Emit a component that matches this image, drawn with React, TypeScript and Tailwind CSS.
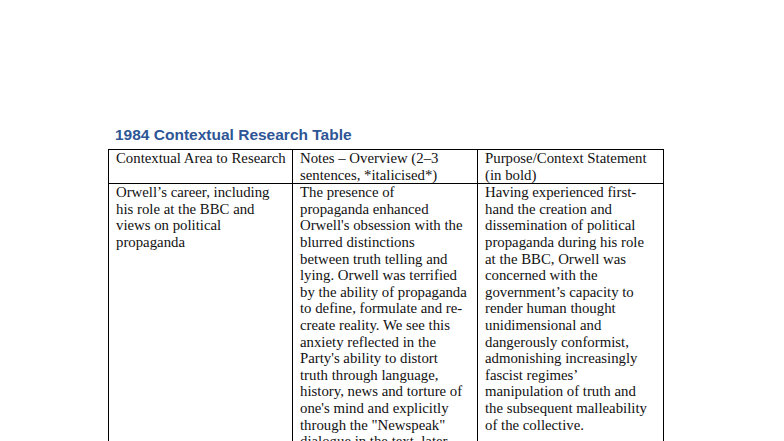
const header: string[][] = [
  ['Contextual Area to Research'],
  ['Notes – Overview (2–3', 'sentences, *italicised*)'],
  ['Purpose/Context Statement', '(in bold)'],
]

const row: string[][] = [
  ['Orwell’s career, including', 'his role at the BBC and', 'views on political', 'propaganda'],
  [
    'The presence of',
    'propaganda enhanced',
    "Orwell's obsession with the",
    'blurred distinctions',
    'between truth telling and',
    'lying. Orwell was terrified',
    'by the ability of propaganda',
    'to define, formulate and re-',
    'create reality. We see this',
    'anxiety reflected in the',
    "Party's ability to distort",
    'truth through language,',
    'history, news and torture of',
    "one's mind and explicitly",
    'through the "Newspeak"',
    'dialogue in the text, later',
  ],
  [
    'Having experienced first-',
    'hand the creation and',
    'dissemination of political',
    'propaganda during his role',
    'at the BBC, Orwell was',
    'concerned with the',
    'government’s capacity to',
    'render human thought',
    'unidimensional and',
    'dangerously conformist,',
    'admonishing increasingly',
    'fascist regimes’',
    'manipulation of truth and',
    'the subsequent malleability',
    'of the collective.',
  ],
]

function Cell({ lines, last }: { lines: string[]; last?: boolean }) {
  return (
    <td className={`align-top px-[7px] py-0 border-black border-l ${last ? 'border-r' : ''}`}>
      {lines.map((l, i) => (
        <div key={i} className="whitespace-nowrap">
          {l}
        </div>
      ))}
    </td>
  )
}

export default function App() {
  return (
    <div className="w-[784px] h-[441px] overflow-hidden bg-white">
      <div className="pt-[125px] pl-[108px]">
        {/* Heading */}
        <h1 className="pl-[7px] mb-[4px] h-[20px] leading-[20px] text-[15.5px] font-bold text-[#2e5596] font-['Liberation_Sans',Arial,sans-serif]">
          1984 Contextual Research Table
        </h1>

        <table className="border-collapse table-fixed w-[555px] text-[#111] text-[14.8px] leading-[16.6px] font-['Liberation_Serif','Times_New_Roman',serif]">
          <colgroup>
            <col className="w-[184px]" />
            <col className="w-[185px]" />
            <col className="w-[186px]" />
          </colgroup>
          <tbody>
            <tr className="border-t border-b border-black">
              {header.map((c, i) => (
                <Cell key={i} lines={c} last={i === 2} />
              ))}
            </tr>
            <tr className="border-b border-black">
              {row.map((c, i) => (
                <Cell key={i} lines={c} last={i === 2} />
              ))}
            </tr>
          </tbody>
        </table>
      </div>
    </div>
  )
}
